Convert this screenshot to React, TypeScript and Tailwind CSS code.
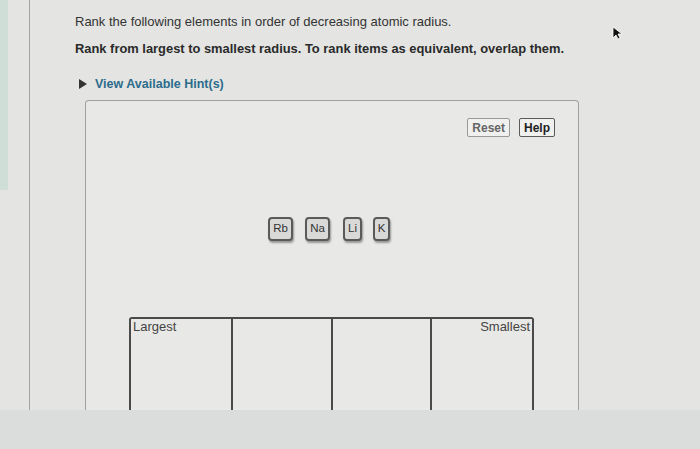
import React from "react";

function Tile({ label, w }: { label: string; w: string }) {
  return (
    <div
      className={`${w} h-[24px] flex items-center justify-center rounded-[4px] border-2 border-[#5a5a5a] bg-[#d9dad8] text-[11.5px] text-[#333] shadow-[1px_2px_2px_rgba(0,0,0,0.35)]`}
    >
      {label}
    </div>
  );
}

export default function App() {
  return (
    <div className="relative w-[700px] h-[449px] overflow-hidden bg-[#e4e5e2] font-['Liberation_Sans',Arial,sans-serif] text-[#333]">
      <div className="absolute left-0 top-0 w-[8px] h-[190px] bg-[#cfdfd7]" />
      <div className="flex h-[410px]">
        <div className="w-[30px] border-r border-[#a3a3a3] shrink-0" />
        <div className="flex-1 flex flex-col pl-[45px] pt-[14px]">
          <div className="text-[13px] leading-[16px]">
            Rank the following elements in order of decreasing atomic radius.
          </div>
          <div className="mt-[11px] text-[12.9px] leading-[16px] font-bold text-[#2a2a2a]">
            Rank from largest to smallest radius. To rank items as equivalent, overlap them.
          </div>
          <div className="mt-[19px] flex items-center gap-[8px] text-[12.5px] leading-[16px] font-bold text-[#2d6c8c]">
            <svg width="8" height="10" viewBox="0 0 8 10" className="ml-[4px]">
              <path d="M0 0 L8 5 L0 10 Z" fill="#333" />
            </svg>
            <span>View Available Hint(s)</span>
          </div>
          <div className="mt-[8px] ml-[10px] w-[494px] flex-1 flex flex-col border-t border-l border-r border-[#a0a0a0] rounded-t-[4px] bg-[#e8e9e6]">
            <div className="flex justify-end gap-[9px] pr-[23px] pt-[17px]">
              <div className="h-[19px] px-[4px] flex items-center border border-[#999] rounded-[2px] bg-[#f0f0ee] text-[12px] font-bold text-[#666]">
                Reset
              </div>
              <div className="h-[19px] px-[4px] flex items-center border border-[#5a5a5a] rounded-[2px] bg-[#f0f0ee] text-[12px] font-bold text-[#222]">
                Help
              </div>
            </div>
            <div className="mt-[80px] flex pl-[182px]">
              <Tile label="Rb" w="w-[25px]" />
              <div className="w-[12px]" />
              <Tile label="Na" w="w-[25px]" />
              <div className="w-[13px]" />
              <Tile label="Li" w="w-[19px]" />
              <div className="w-[11px]" />
              <Tile label="K" w="w-[17px]" />
            </div>
            <div className="mt-[76px] ml-[43px] w-[405px] flex-1 flex border-t-2 border-[#4a4a4a] rounded-tl-[3px] rounded-tr-[3px]">
              <div className="flex-1 border-l-2 border-[#4a4a4a] pl-[2px] text-[13px] leading-[16px] text-[#444]">
                Largest
              </div>
              <div className="flex-1 border-l-2 border-[#4a4a4a]" />
              <div className="flex-1 border-l-2 border-[#4a4a4a]" />
              <div className="flex-1 border-l-2 border-r-2 border-[#4a4a4a] pr-[2px] text-right text-[13px] leading-[16px] text-[#444]">
                Smallest
              </div>
            </div>
          </div>
        </div>
      </div>
      <div className="h-[39px] bg-[#dadddc]" />
      <svg className="absolute left-[612px] top-[26px]" width="12" height="14" viewBox="0 0 12 14">
        <path d="M1 1 L1 12 L4 9 L6 13 L8 12 L6 8 L10 8 Z" fill="#111" stroke="#fff" strokeWidth="0.8" />
      </svg>
    </div>
  );
}
